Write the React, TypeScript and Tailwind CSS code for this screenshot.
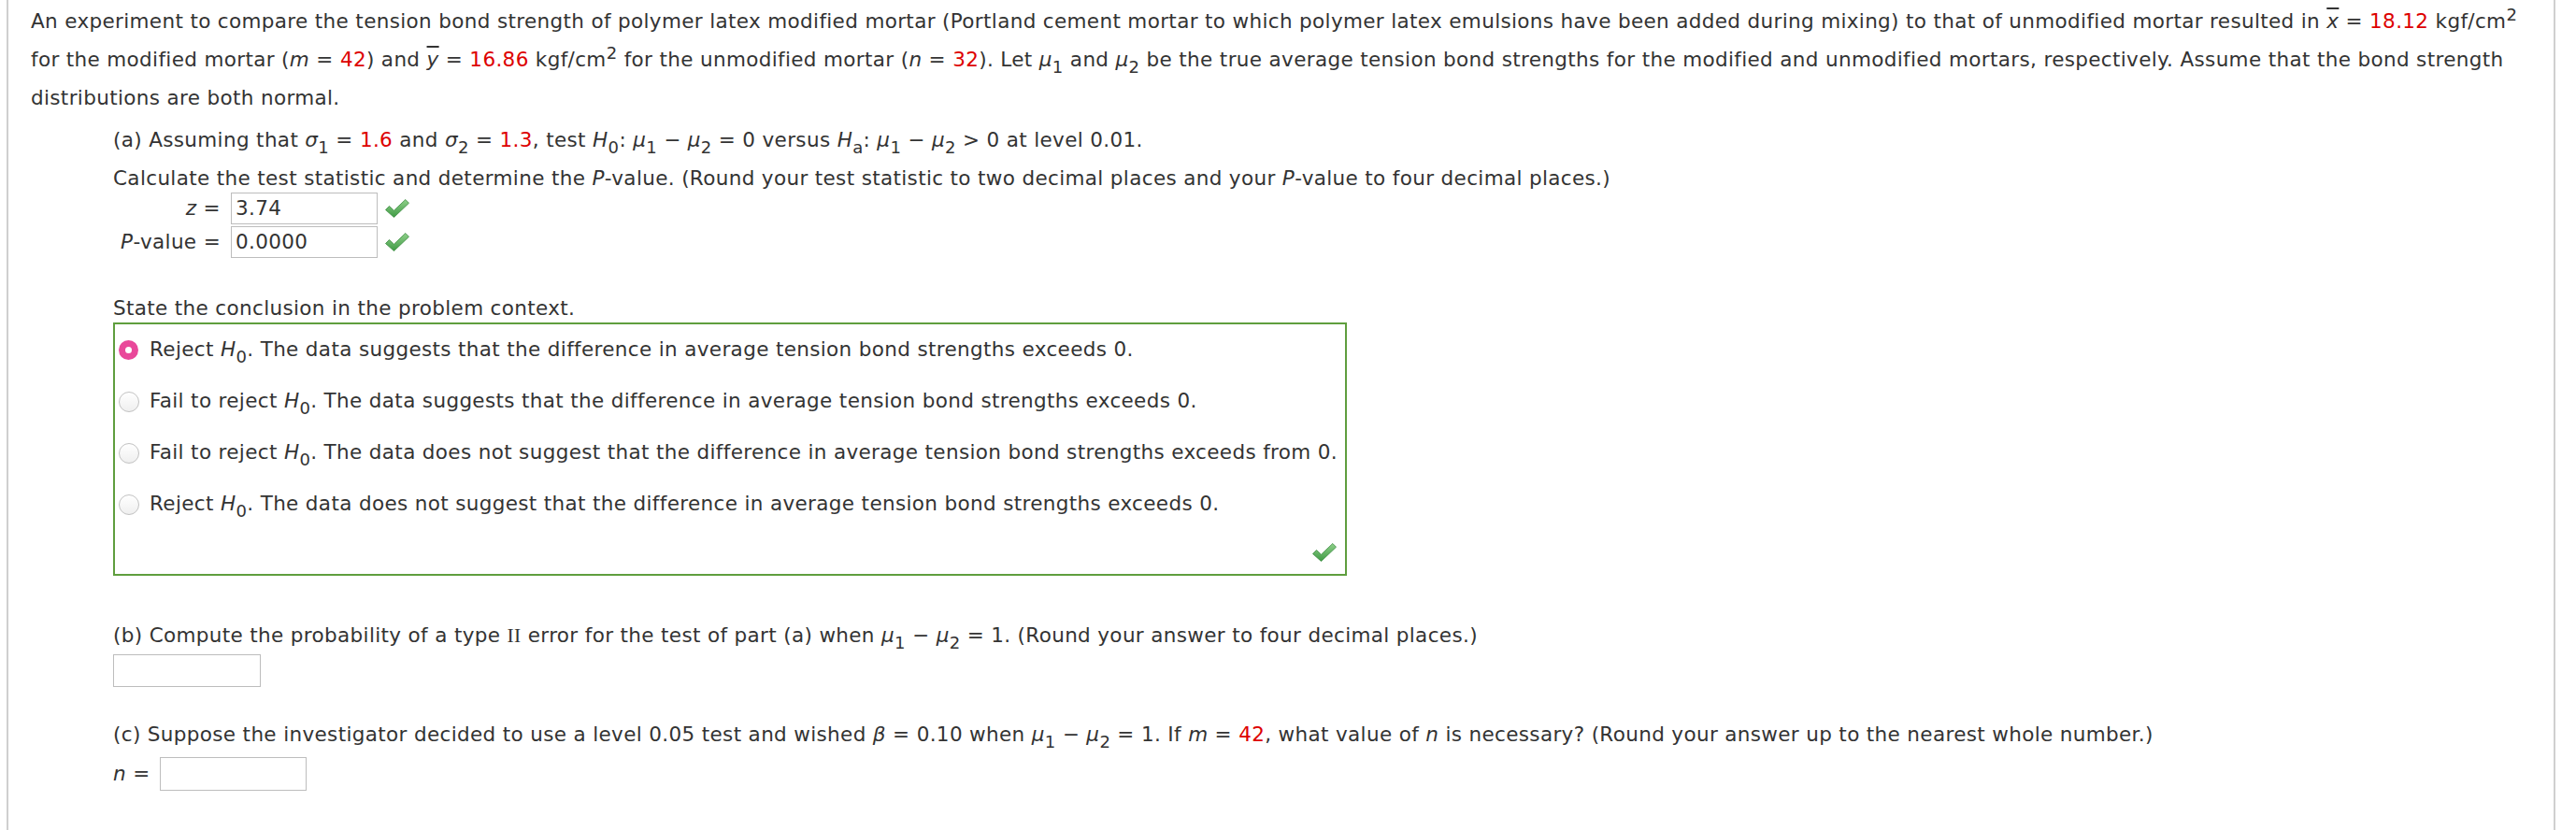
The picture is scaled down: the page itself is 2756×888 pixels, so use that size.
import React from "react";

const RED = "text-[#dd0000]";

function Sub({ children }: { children: React.ReactNode }) {
  return <sub className="bottom-[-7px] text-[18px]">{children}</sub>;
}

function Sup({ children }: { children: React.ReactNode }) {
  return <sup className="top-[-8px] text-[18px]">{children}</sup>;
}

function Mu({ n }: { n: string }) {
  return (
    <>
      <i>μ</i>
      <Sub>{n}</Sub>
    </>
  );
}

function Check() {
  return (
    <svg width="28" height="22" viewBox="0 0 28 22" className="shrink-0">
      <defs>
        <linearGradient id="chk" x1="0" y1="0" x2="0" y2="1">
          <stop offset="0" stopColor="#8fd08a" />
          <stop offset="1" stopColor="#3f9a44" />
        </linearGradient>
      </defs>
      <path
        d="M1.5 12.5 L5.5 8.5 L10.5 13.2 L22.8 1.5 L26.5 5.3 L10.5 20.5 Z"
        fill="url(#chk)"
        stroke="#3b8c40"
        strokeWidth="0.8"
        strokeLinejoin="round"
      />
    </svg>
  );
}

function Radio({ selected }: { selected?: boolean }) {
  if (selected) {
    return (
      <span className="flex h-[21px] w-[21px] shrink-0 items-center justify-center rounded-full bg-[#e9489a]">
        <span className="h-[7px] w-[7px] rounded-full bg-white" />
      </span>
    );
  }
  return (
    <span className="h-[22px] w-[22px] shrink-0 rounded-full border border-[#c2c2c2] bg-linear-to-b from-white to-[#efefef]" />
  );
}

function Option({
  selected,
  children,
}: {
  selected?: boolean;
  children: React.ReactNode;
}) {
  return (
    <div className="flex h-[55px] items-center pl-[4px]">
      <Radio selected={selected} />
      <span className={selected ? "ml-[12px] whitespace-nowrap" : "ml-[11px] whitespace-nowrap"}>
        {children}
      </span>
    </div>
  );
}

function H0() {
  return (
    <>
      <i>H</i>
      <Sub>0</Sub>
    </>
  );
}

export default function App() {
  return (
    <div
      className="min-h-[888px] bg-white text-[21.5px] tracking-[0.35px] text-[#333333]"
      style={{ fontFamily: 'Verdana, "DejaVu Sans", sans-serif' }}
    >
      <div className="ml-[7px] h-[888px] w-[2727px] border-x-2 border-[#cfcfcf] pl-[24px]">
        {/* intro */}
        <div className="pt-[2px] leading-[41px]">
          <div className="whitespace-nowrap">
            An experiment to compare the tension bond strength of polymer latex modified mortar (Portland
            cement mortar to which polymer latex emulsions have been added during mixing) to that of
            unmodified mortar resulted in <i className="overline">x</i> = <span className={RED}>18.12</span>{" "}
            kgf/cm<Sup>2</Sup>
          </div>
          <div className="whitespace-nowrap">
            for the modified mortar (<i>m</i> = <span className={RED}>42</span>) and{" "}
            <i className="overline">y</i> = <span className={RED}>16.86</span> kgf/cm<Sup>2</Sup> for the
            unmodified mortar (<i>n</i> = <span className={RED}>32</span>). Let <Mu n="1" /> and{" "}
            <Mu n="2" /> be the true average tension bond strengths for the modified and unmodified
            mortars, respectively. Assume that the bond strength
          </div>
          <div className="whitespace-nowrap">distributions are both normal.</div>
        </div>

        <div className="pl-[88px]">
          {/* part a */}
          <div className="mt-[4px] whitespace-nowrap leading-[42px]">
            (a) Assuming that <i>σ</i>
            <Sub>1</Sub> = <span className={RED}>1.6</span> and <i>σ</i>
            <Sub>2</Sub> = <span className={RED}>1.3</span>, test <H0 />: <Mu n="1" /> − <Mu n="2" /> = 0
            versus <i>H</i>
            <Sub>a</Sub>: <Mu n="1" /> − <Mu n="2" /> &gt; 0 at level 0.01.
          </div>
          <div className="whitespace-nowrap leading-[39px]">
            Calculate the test statistic and determine the <i>P</i>-value. (Round your test statistic to
            two decimal places and your <i>P</i>-value to four decimal places.)
          </div>

          <div className="mt-[-4px] flex flex-col gap-[2px]">
            <div className="flex h-[34px] items-center">
              <span className="w-[115px] text-right">
                <i>z</i> =
              </span>
              <div className="ml-[11px] flex h-[34px] w-[157px] items-center border border-[#bdbdbd] pl-[4px]">
                3.74
              </div>
              <span className="ml-[7px]">
                <Check />
              </span>
            </div>
            <div className="flex h-[34px] items-center">
              <span className="w-[115px] whitespace-nowrap text-right">
                <i>P</i>-value =
              </span>
              <div className="ml-[11px] flex h-[34px] w-[157px] items-center border border-[#bdbdbd] pl-[4px]">
                0.0000
              </div>
              <span className="ml-[7px]">
                <Check />
              </span>
            </div>
          </div>

          <div className="mt-[39px] leading-[30px]">State the conclusion in the problem context.</div>
          <div className="w-[1320px] border-2 border-[#5f9e3e]">
            <Option selected>
              Reject <H0 />. The data suggests that the difference in average tension bond strengths
              exceeds 0.
            </Option>
            <Option>
              Fail to reject <H0 />. The data suggests that the difference in average tension bond
              strengths exceeds 0.
            </Option>
            <Option>
              Fail to reject <H0 />. The data does not suggest that the difference in average tension bond
              strengths exceeds from 0.
            </Option>
            <Option>
              Reject <H0 />. The data does not suggest that the difference in average tension bond
              strengths exceeds 0.
            </Option>
            <div className="flex h-[47px] items-center justify-end pr-[8px]">
              <Check />
            </div>
          </div>

          {/* part b */}
          <div className="mt-[43px] whitespace-nowrap leading-[41px]">
            (b) Compute the probability of a type{" "}
            <span style={{ fontFamily: '"Liberation Serif", serif' }}>II</span> error for the test of
            part (a) when <Mu n="1" /> − <Mu n="2" /> = 1. (Round your answer to four decimal places.)
          </div>
          <div className="mt-[-1px] h-[35px] w-[158px] border border-[#bdbdbd]" />

          {/* part c */}
          <div className="mt-[30px] whitespace-nowrap leading-[41px]">
            (c) Suppose the investigator decided to use a level 0.05 test and wished <i>β</i> = 0.10 when{" "}
            <Mu n="1" /> − <Mu n="2" /> = 1. If <i>m</i> = <span className={RED}>42</span>, what value of{" "}
            <i>n</i> is necessary? (Round your answer up to the nearest whole number.)
          </div>
          <div className="mt-[4px] flex h-[36px] items-center">
            <span className="whitespace-nowrap">
              <i>n</i> =
            </span>
            <div className="ml-[10px] h-[36px] w-[157px] border border-[#bdbdbd]" />
          </div>
        </div>
      </div>
    </div>
  );
}
